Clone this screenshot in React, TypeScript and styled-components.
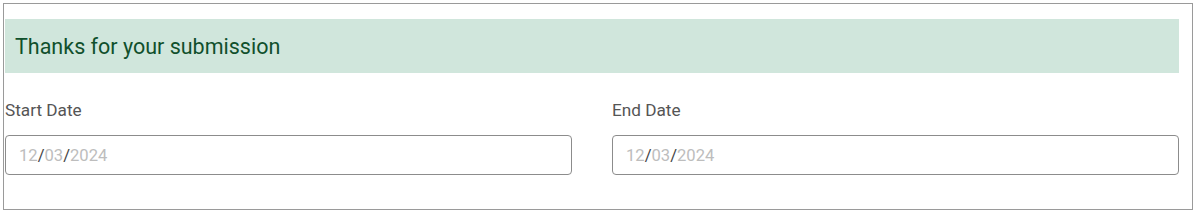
import React from "react";
import styled, { createGlobalStyle } from "styled-components";

const Global = createGlobalStyle`
  html, body { margin: 0; padding: 0; background: #ffffff; }
  body { font-family: Roboto, "Liberation Sans", Arial, sans-serif; }
  * { box-sizing: border-box; }
`;

const Frame = styled.div`
  margin: 3px;
  width: 1190px;
  height: 207px;
  border: 1px solid #9a9a9a;
  padding: 15px 13px 0 1px;
`;

const Banner = styled.div`
  height: 54px;
  background: #d0e6dc;
  display: flex;
  align-items: center;
  padding-left: 10px;
  color: #10502c;
  font-size: 21.5px;
`;

const Grid = styled.div`
  display: grid;
  grid-template-columns: 567px 567px;
  column-gap: 40px;
  margin-top: 27px;
`;

const Field = styled.div`
  display: flex;
  flex-direction: column;
`;

const Label = styled.label`
  font-size: 17.2px;
  line-height: 21px;
  color: #555555;
  margin-bottom: 14px;
`;

const DateBox = styled.div`
  height: 40px;
  border: 1px solid #8c8c8c;
  border-radius: 4px;
  display: flex;
  align-items: center;
  padding-left: 13px;
  font-size: 16.6px;
  color: #bdbdbd;
`;

const Sep = styled.span`
  color: #444444;
`;

const DateField: React.FC<{ label: string }> = ({ label }) => (
  <Field>
    <Label>{label}</Label>
    <DateBox>
      12<Sep>/</Sep>03<Sep>/</Sep>2024
    </DateBox>
  </Field>
);

export default function App() {
  return (
    <>
      <Global />
      <Frame>
        <Banner>Thanks for your submission</Banner>
        <Grid>
          <DateField label="Start Date" />
          <DateField label="End Date" />
        </Grid>
      </Frame>
    </>
  );
}
